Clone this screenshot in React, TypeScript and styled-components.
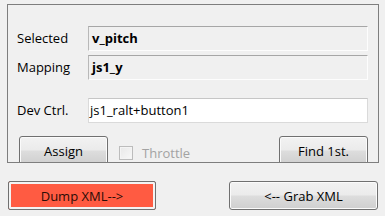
import React from "react";
import styled, { createGlobalStyle } from "styled-components";

const Global = createGlobalStyle`
  html, body { margin: 0; padding: 0; background: #f0f0f0; }
  body { font-family: "Open Sans", "Noto Sans", sans-serif; font-size: 13px; color: #000; }
  * { box-sizing: border-box; }
`;

const Page = styled.div`
  width: 385px;
  height: 216px;
  padding: 4px 0 0 7px;
  background: #f0f0f0;
  display: flex;
  flex-direction: column;
`;

const GroupBox = styled.div`
  width: 372px;
  height: 159px;
  border: 1px solid #7e7e7e;
  overflow: hidden;
  padding: 21px 10px 0 9px;
  display: flex;
  flex-direction: column;
`;

const FieldRow = styled.div<{ $mt?: number }>`
  display: grid;
  grid-template-columns: 71px 1fr;
  align-items: center;
  height: 25px;
  margin-top: ${(p) => p.$mt ?? 0}px;
`;

const Label = styled.span`
  line-height: 25px;
  white-space: nowrap;
`;

const ReadOnlyField = styled.div`
  height: 25px;
  border-top: 1px solid #a6a6a6;
  border-left: 1px solid #b8b8b8;
  border-right: 1px solid #fdfdfd;
  border-bottom: 1px solid #fdfdfd;
  background: #f0f0f0;
  font-weight: 700;
  padding-left: 3px;
  line-height: 22px;
`;

const EditField = styled.div`
  height: 25px;
  border: 1px solid #dadada;
  border-top-color: #c6c6c6;
  background: #ffffff;
  padding-left: 1px;
  line-height: 22px;
`;

const ButtonRow = styled.div`
  display: flex;
  align-items: flex-start;
  margin-top: 13px;
  padding-left: 2px;
`;

const WinButton = styled.div<{ $w: number; $h: number }>`
  width: ${(p) => p.$w}px;
  height: ${(p) => p.$h}px;
  border: 1px solid #707070;
  border-radius: 3px;
  background: linear-gradient(#f2f2f2 0%, #ebebeb 48%, #dddddd 52%, #cfcfcf 100%);
  box-shadow: inset 0 0 0 1px #fbfbfb;
  display: flex;
  align-items: center;
  justify-content: center;
  flex-shrink: 0;
  color: #000;
`;

const DangerButton = styled(WinButton)`
  border-radius: 2px;
  background: #ff5b42;
  box-shadow: inset 0 0 0 2px #f3f3f3;
  color: #2a0c06;
`;

const CheckWrap = styled.div`
  display: flex;
  align-items: center;
  margin-left: 11px;
  margin-top: 8px;
  color: #a3a3a3;
  flex: 1;
`;

const CheckBox = styled.span`
  width: 14px;
  height: 14px;
  border: 1px solid #bcbcbc;
  background: linear-gradient(135deg, #e8e8e8, #f8f8f8);
  box-shadow: inset 0 0 0 1px #f4f4f4;
  margin-right: 9px;
  display: inline-block;
`;

const BottomRow = styled.div`
  display: flex;
  justify-content: space-between;
  width: 371px;
  margin-top: 18px;
  padding-left: 1px;
`;

export default function App() {
  return (
    <>
      <Global />
      <Page>
        <GroupBox>
          <FieldRow>
            <Label>Selected</Label>
            <ReadOnlyField>v_pitch</ReadOnlyField>
          </FieldRow>
          <FieldRow $mt={4}>
            <Label>Mapping</Label>
            <ReadOnlyField>js1_y</ReadOnlyField>
          </FieldRow>
          <FieldRow $mt={18}>
            <Label>Dev Ctrl.</Label>
            <EditField>js1_ralt+button1</EditField>
          </FieldRow>
          <ButtonRow>
            <WinButton $w={89} $h={29}>Assign</WinButton>
            <CheckWrap>
              <CheckBox />
              <span>Throttle</span>
            </CheckWrap>
            <WinButton $w={89} $h={29}>Find 1st.</WinButton>
          </ButtonRow>
        </GroupBox>
        <BottomRow>
          <DangerButton $w={148} $h={29}>Dump XML--&gt;</DangerButton>
          <WinButton $w={149} $h={29}>&lt;-- Grab XML</WinButton>
        </BottomRow>
      </Page>
    </>
  );
}
